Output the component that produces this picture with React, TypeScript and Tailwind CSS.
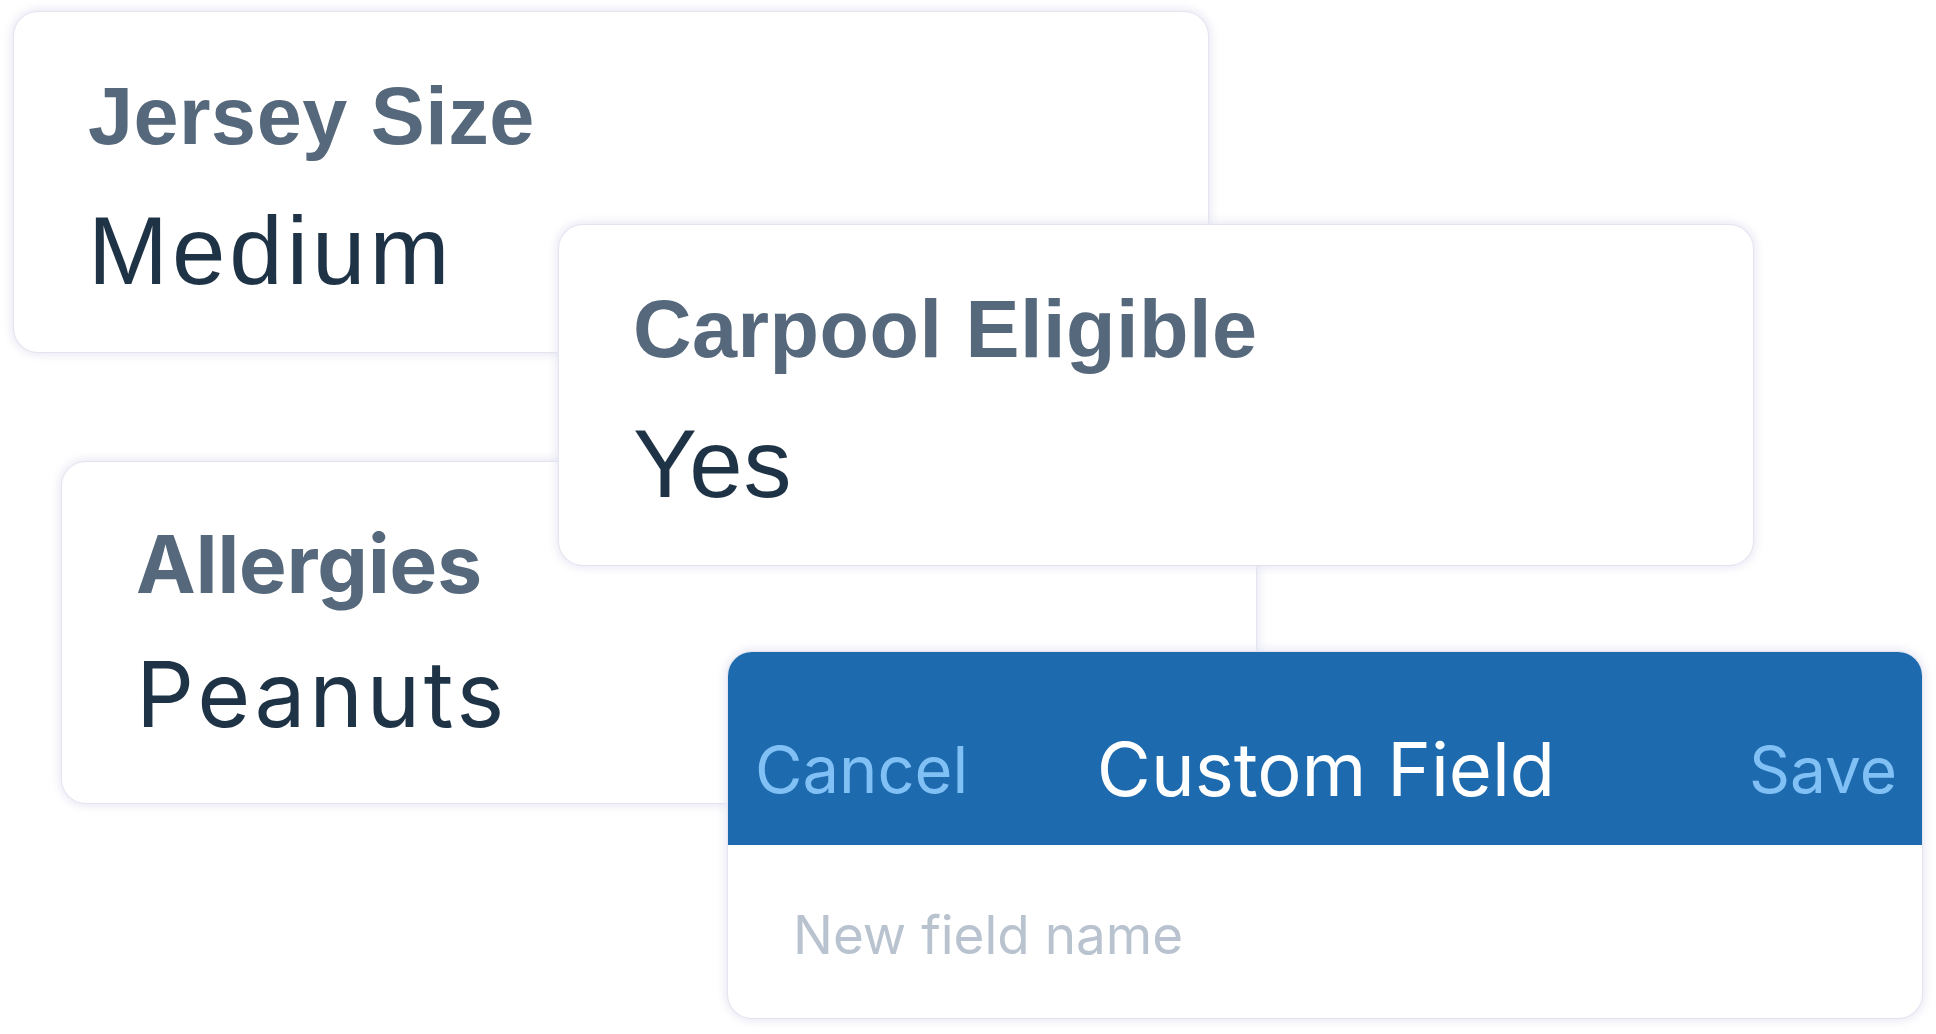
import React from "react";

const cardShadow =
  "shadow-[0_0_0_1px_rgba(226,226,240,0.9),0_0_9px_3px_rgba(228,228,242,0.85)]";

function InfoCard({
  label,
  value,
  pos,
  valueTracking,
  inter,
}: {
  label: string;
  value: string;
  pos: string;
  valueTracking: string;
  inter?: boolean;
}) {
  if (inter) {
    return (
      <div
        className={`absolute ${pos} w-[1194px] h-[341px] rounded-[24px] bg-white ${cardShadow} flex flex-col pl-[74px] pt-[62px]`}
        style={{ fontFamily: "Inter, 'Noto Sans', sans-serif" }}
      >
        <div className="text-[80px] leading-none font-bold text-[#56687b]">{label}</div>
        <div className={`mt-[45px] text-[91px] leading-none font-normal text-[#1f3346] ${valueTracking}`}>
          {value}
        </div>
      </div>
    );
  }
  return (
    <div
      className={`absolute ${pos} w-[1194px] h-[340px] rounded-[24px] bg-white ${cardShadow} flex flex-col pl-[74px] pt-[64px]`}
      style={{ fontFamily: "'Liberation Sans', Arial, sans-serif" }}
    >
      <div className="text-[81px] leading-none font-bold text-[#56687b] tracking-[0.5px]">{label}</div>
      <div className={`mt-[46px] text-[96px] leading-none font-normal text-[#1f3346] ${valueTracking}`}>
        {value}
      </div>
    </div>
  );
}

export default function App() {
  return (
    <div className="relative w-[1936px] h-[1034px] bg-white overflow-hidden">
      <InfoCard
        label="Jersey Size"
        value="Medium"
        valueTracking="tracking-[4px]"
        pos="left-[14px] top-[12px] z-[1]"
      />
      <InfoCard
        label="Allergies"
        value="Peanuts"
        valueTracking="tracking-[3.5px]"
        pos="left-[62px] top-[462px] z-[2]"
        inter
      />
      <InfoCard
        label="Carpool Eligible"
        value="Yes"
        valueTracking="tracking-[1px]"
        pos="left-[559px] top-[225px] z-[3]"
      />

      <div
        className={`absolute left-[728px] top-[652px] z-[4] w-[1194px] h-[366px] rounded-[24px] bg-white ${cardShadow} overflow-hidden flex flex-col`}
        style={{ fontFamily: "Inter, 'Noto Sans', sans-serif" }}
      >
        <div className="h-[193px] bg-[#1d6bae] flex items-end pl-[27px] pr-[25px]">
          <div className="flex-1 mb-[43px] text-[65px] leading-none text-[#80c0f5]">Cancel</div>
          <div className="mb-[39px] text-[74px] leading-none text-white">Custom Field</div>
          <div className="flex-1 mb-[43px] text-[64px] leading-none text-[#80c0f5] text-right">Save</div>
        </div>
        <div className="flex-1 pl-[65px] pt-[64px]">
          <div className="text-[53px] leading-none text-[#b9c3cf]">New field name</div>
        </div>
      </div>
    </div>
  );
}
